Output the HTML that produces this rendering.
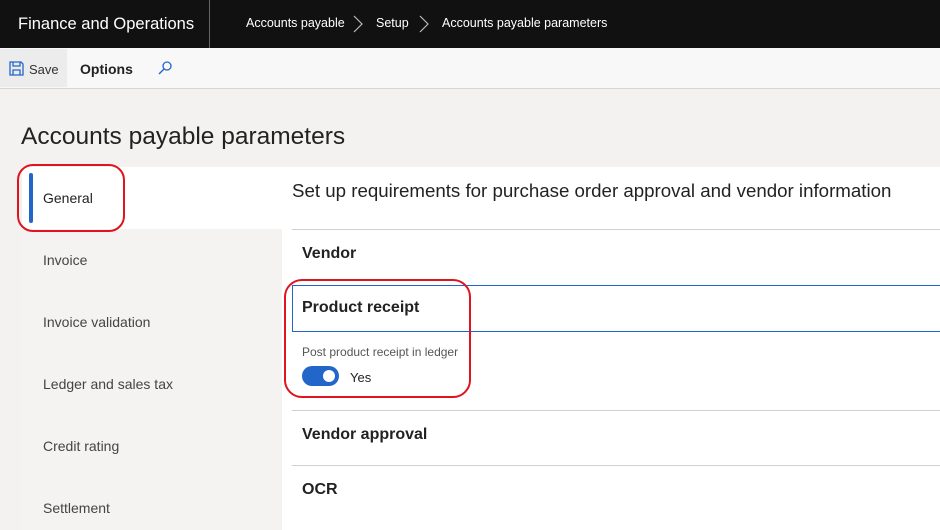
<!DOCTYPE html>
<html><head><style>
*{margin:0;padding:0;box-sizing:border-box}
html,body{width:940px;height:530px;overflow:hidden}
body{background:#f3f2f1;font-family:"Liberation Sans",sans-serif;position:relative;color:#222}
.abs{position:absolute}
.top{left:0;top:0;width:940px;height:48px;background:#111}
.tb{left:0;top:48px;width:940px;height:41px;background:#f8f8f8;border-bottom:1px solid #d6d6d6}
.nav{left:22px;width:260px;height:62px;background:#f4f3f2;font-size:14px;color:#444;padding-left:21px;line-height:62px}
.line{left:292px;width:648px;height:1px;background:#d0d0d0}
.h{left:302px;font-size:16px;font-weight:bold;color:#222}
</style></head><body>
<div class="abs top"></div>
<div class="abs" style="left:18px;top:15px;color:#fff;font-size:16.5px">Finance and Operations</div>
<div class="abs" style="left:209px;top:0;width:1px;height:48px;background:#666"></div>
<div class="abs" style="left:246px;top:16px;color:#fff;font-size:12.5px">Accounts payable</div>
<svg class="abs" style="left:351px;top:14px" width="14" height="20"><path d="M3 2L11 10L3 18" stroke="#bbb" fill="none" stroke-width="1.2"/></svg>
<div class="abs" style="left:376px;top:16px;color:#fff;font-size:12.5px">Setup</div>
<svg class="abs" style="left:417px;top:14px" width="14" height="20"><path d="M3 2L11 10L3 18" stroke="#bbb" fill="none" stroke-width="1.2"/></svg>
<div class="abs" style="left:442px;top:16px;color:#fff;font-size:12.5px">Accounts payable parameters</div>
<div class="abs tb"></div>
<div class="abs" style="left:0;top:49px;width:67px;height:38px;background:#ececec"></div>
<svg class="abs" style="left:9px;top:61px" width="15" height="15"><path d="M1 1H12L14 3V14H1Z M4 1V5H11V1 M4 14V9H11V14" stroke="#2366c9" fill="none" stroke-width="1.3"/></svg>
<div class="abs" style="left:29px;top:62px;font-size:13px;color:#333">Save</div>
<div class="abs" style="left:80px;top:61px;font-size:14px;font-weight:bold;color:#222">Options</div>
<svg class="abs" style="left:156px;top:60px" width="18" height="18"><circle cx="11" cy="6" r="4" stroke="#2366c9" fill="none" stroke-width="1.3"/><path d="M8 9L3 14" stroke="#2366c9" stroke-width="1.4"/></svg>
<div class="abs" style="left:21px;top:123px;font-size:24.5px;color:#222">Accounts payable parameters</div>
<div class="abs" style="left:22px;top:167px;width:918px;height:363px;background:#fff"></div>
<div class="abs" style="left:22px;top:167px;width:260px;height:62px;background:#fff"></div>
<div class="abs" style="left:29px;top:173px;width:4px;height:50px;background:#2366c9;border-radius:2px"></div>
<div class="abs" style="left:43px;top:190px;font-size:14px;color:#222">General</div>
<div class="abs nav" style="top:229px">Invoice</div>
<div class="abs nav" style="top:291px">Invoice validation</div>
<div class="abs nav" style="top:353px">Ledger and sales tax</div>
<div class="abs nav" style="top:415px">Credit rating</div>
<div class="abs nav" style="top:477px">Settlement</div>
<div class="abs" style="left:17px;top:164px;width:108px;height:68px;border:2.5px solid #e0141e;border-radius:16px"></div>
<div class="abs" style="left:292px;top:180px;font-size:18.7px;color:#222">Set up requirements for purchase order approval and vendor information</div>
<div class="abs line" style="top:229px"></div>
<div class="abs h" style="top:245px">Vendor</div>
<div class="abs" style="left:292px;top:285px;width:650px;height:47px;border:1px solid #2366c9;border-right:none"></div>
<div class="abs h" style="top:299px">Product receipt</div>
<div class="abs" style="left:302px;top:345px;font-size:12px;color:#555">Post product receipt in ledger</div>
<div class="abs" style="left:302px;top:366px;width:37px;height:20px;border-radius:10px;background:#2366c9"></div>
<div class="abs" style="left:323px;top:370px;width:12px;height:12px;border-radius:6px;background:#fff"></div>
<div class="abs" style="left:350px;top:370px;font-size:13px;color:#222">Yes</div>
<div class="abs" style="left:284px;top:279px;width:187px;height:119px;border:2.5px solid #e0141e;border-radius:18px"></div>
<div class="abs line" style="top:410px"></div>
<div class="abs h" style="top:426px">Vendor approval</div>
<div class="abs line" style="top:465px"></div>
<div class="abs h" style="top:481px">OCR</div>
</body></html>
